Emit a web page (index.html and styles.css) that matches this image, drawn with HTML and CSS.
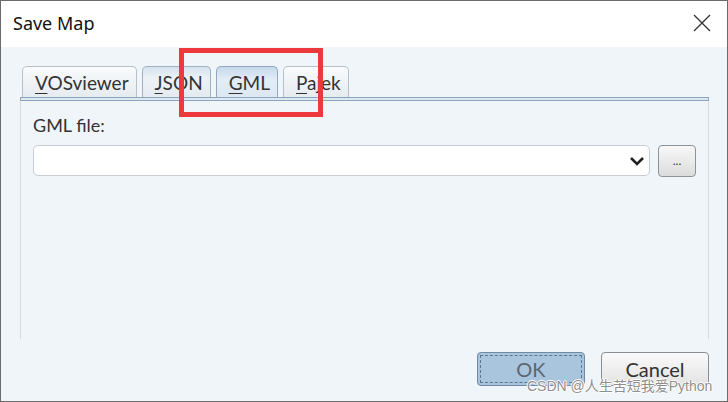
FILE: index.html
```html
<!DOCTYPE html>
<html lang="en">
<head>
    <meta charset="UTF-8">
    <title>Save Map</title>
    <link rel="stylesheet" href="styles.css">
</head>
<body>
    <div class="window">
        <div class="titlebar">
            <span class="title">Save Map</span>
            <svg class="close-icon" width="18" height="18" viewBox="0 0 18 18">
                <path d="M1 1 L17 17 M17 1 L1 17" stroke="#333" stroke-width="1.3" fill="none"/>
            </svg>
        </div>
        <div class="content">
            <div class="tabs">
                <div class="tab"><u>V</u>OSviewer</div>
                <div class="tab tab-hover"><u>J</u>SON</div>
                <div class="tab tab-active"><u>G</u>ML</div>
                <div class="tab"><u>P</u>ajek</div>
            </div>
            <div class="tab-line"></div>
            <div class="panel">
                <div class="field-label">GML file:</div>
                <div class="field-row">
                    <div class="combo">
                        <svg class="chevron" width="16" height="10" viewBox="0 0 16 10">
                            <path d="M2 2 L8 8 L14 2" stroke="#222" stroke-width="2.6" fill="none"/>
                        </svg>
                    </div>
                    <div class="browse">...</div>
                </div>
            </div>
            <div class="buttons">
                <div class="btn btn-ok"><span>OK</span></div>
                <div class="btn">Cancel</div>
            </div>
        </div>
        <div class="highlight"></div>
        <div class="watermark">CSDN @人生苦短我爱Python</div>
    </div>
</body>
</html>
```
FILE: styles.css
```css
body {
    margin: 0;
    font-family: "Lato", "Liberation Sans", sans-serif;
    background-color: #ffffff;
}
.window {
    position: relative;
    width: 726px;
    height: 400px;
    border: 1px solid #6b6b6b;
    display: flex;
    flex-direction: column;
    overflow: hidden;
}
.titlebar {
    height: 46px;
    background-color: #ffffff;
    display: flex;
    align-items: center;
    justify-content: space-between;
    padding: 0 16px 0 12px;
}
.title {
    font-family: "Noto Sans", "Liberation Sans", sans-serif;
    font-size: 18px;
    color: #111;
    margin-top: -2px;
}
.close-icon {
    margin-top: -2px;
}
.content {
    flex: 1;
    background-color: #f0f5fa;
    padding: 18px 18px 0 19px;
    display: flex;
    flex-direction: column;
}
.tabs {
    display: flex;
    align-items: flex-end;
    gap: 5px;
    padding-left: 2px;
    height: 32px;
}
.tab {
    height: 30px;
    padding: 0 7px 0 12px;
    font-size: 19px;
    line-height: 31px;
    color: #333;
    border: 1px solid #b6c0ca;
    border-bottom: none;
    border-radius: 5px 5px 0 0;
    background: linear-gradient(#f9fbfc, #e6ebf0);
}
.tab u {
    text-underline-offset: 3px;
}
.tab-hover {
    border-color: #9fb1c3;
    background: linear-gradient(#d5e2ee, #eef2f6 40%, #e4eaf0);
}
.tab-active {
    border-color: #93a8bd;
    background: linear-gradient(#c6d9ec, #e3edf7 45%, #dce7f2);
}
.tab-line {
    height: 2px;
    border: 1px solid #8fa5bb;
    background-color: #dce9f5;
}
.panel {
    box-sizing: border-box;
    height: 238px;
    border-left: 1px solid #d6dbe1;
    border-right: 1px solid #d6dbe1;
    padding: 13px 12px 0 12px;
}
.field-label {
    font-size: 18px;
    color: #333;
    line-height: 22px;
}
.field-row {
    display: flex;
    gap: 8px;
    margin-top: 9px;
}
.combo {
    flex: 1;
    height: 29px;
    border: 1px solid #c9cdd2;
    border-radius: 5px;
    background-color: #ffffff;
    display: flex;
    align-items: center;
    justify-content: flex-end;
    padding-right: 4px;
}
.browse {
    width: 36px;
    height: 30px;
    border: 1px solid #8d939a;
    border-radius: 4px;
    background: linear-gradient(#f8f8f8, #dcdcdc);
    font-size: 12px;
    color: #333;
    text-align: center;
    line-height: 30px;
}
.buttons {
    display: flex;
    justify-content: flex-end;
    gap: 16px;
    margin-top: 13px;
}
.btn {
    width: 106px;
    height: 32px;
    border: 1px solid #8a8f95;
    border-radius: 4px;
    background: linear-gradient(#fafafa, #e2e2e2);
    font-size: 20px;
    color: #333;
    text-align: center;
    line-height: 32px;
}
.btn-ok {
    border-color: #6f8aa6;
    background: #a9c5de;
    padding: 2px;
    width: 102px;
    height: 28px;
}
.btn-ok span {
    display: block;
    height: 26px;
    line-height: 27px;
    border: 1px dashed #5b7590;
    color: #5a6570;
}
.highlight {
    position: absolute;
    left: 178px;
    top: 47px;
    width: 134px;
    height: 59px;
    border: 5px solid #ec3a3c;
}
.watermark {
    position: absolute;
    left: 526px;
    top: 374px;
    font-family: "Liberation Sans", "Noto Sans CJK SC", sans-serif;
    font-size: 14px;
    color: #8f8f8f;
    text-shadow: 1px 0 #fff, -1px 0 #fff, 0 1px #fff, 0 -1px #fff;
}
```
